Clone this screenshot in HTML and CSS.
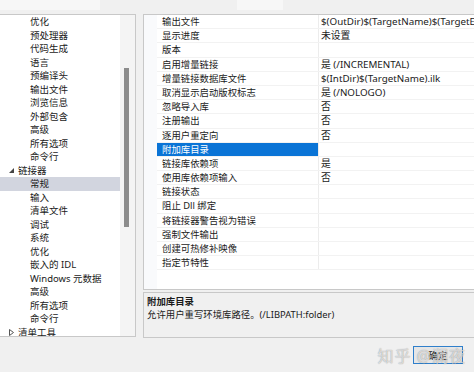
FILE: index.html
```html
<!DOCTYPE html>
<html lang="zh-CN">

<head>
    <meta charset="UTF-8">
    <meta name="viewport" content="width=device-width, initial-scale=1.0">
    <title>属性页</title>

    <link rel="stylesheet" href="styles.css">
</head>

<body>
    <div class="top">
        <span class="tab-edge tab-left"></span>
        <span class="tab-edge tab-mid"></span>
    </div>

    <div class="main">
        <div class="tree">
            <ul class="tree-list">
                <li class="sub">优化</li>
                <li class="sub">预处理器</li>
                <li class="sub">代码生成</li>
                <li class="sub">语言</li>
                <li class="sub">预编译头</li>
                <li class="sub">输出文件</li>
                <li class="sub">浏览信息</li>
                <li class="sub">外部包含</li>
                <li class="sub">高级</li>
                <li class="sub">所有选项</li>
                <li class="sub">命令行</li>
                <li class="group">
                    <svg class="arrow" width="5" height="5" viewBox="0 0 5 5"><polygon points="5,0 5,5 0,5" fill="#444" /></svg>
                    链接器
                </li>
                <li class="sub selected">常规</li>
                <li class="sub">输入</li>
                <li class="sub">清单文件</li>
                <li class="sub">调试</li>
                <li class="sub">系统</li>
                <li class="sub">优化</li>
                <li class="sub">嵌入的 IDL</li>
                <li class="sub">Windows 元数据</li>
                <li class="sub">高级</li>
                <li class="sub">所有选项</li>
                <li class="sub">命令行</li>
                <li class="group">
                    <svg class="arrow" width="5" height="7" viewBox="0 0 5 7"><polygon points="0.5,0.5 4.5,3.5 0.5,6.5" fill="none" stroke="#555" stroke-width="1" /></svg>
                    清单工具
                </li>
            </ul>
            <div class="scroll-track">
                <div class="scroll-thumb"></div>
            </div>
        </div>

        <div class="side">
            <div class="grid">
                <div class="gutter"></div>
                <div class="rows">
                    <div class="prop"><span class="name">输出文件</span><span class="value">$(OutDir)$(TargetName)$(TargetExt)</span></div>
                    <div class="prop"><span class="name">显示进度</span><span class="value">未设置</span></div>
                    <div class="prop"><span class="name">版本</span><span class="value"></span></div>
                    <div class="prop"><span class="name">启用增量链接</span><span class="value">是 (/INCREMENTAL)</span></div>
                    <div class="prop"><span class="name">增量链接数据库文件</span><span class="value">$(IntDir)$(TargetName).ilk</span></div>
                    <div class="prop"><span class="name">取消显示启动版权标志</span><span class="value">是 (/NOLOGO)</span></div>
                    <div class="prop"><span class="name">忽略导入库</span><span class="value">否</span></div>
                    <div class="prop"><span class="name">注册输出</span><span class="value">否</span></div>
                    <div class="prop"><span class="name">逐用户重定向</span><span class="value">否</span></div>
                    <div class="prop selected"><span class="name">附加库目录</span><span class="value"></span></div>
                    <div class="prop"><span class="name">链接库依赖项</span><span class="value">是</span></div>
                    <div class="prop"><span class="name">使用库依赖项输入</span><span class="value">否</span></div>
                    <div class="prop"><span class="name">链接状态</span><span class="value"></span></div>
                    <div class="prop"><span class="name">阻止 Dll 绑定</span><span class="value"></span></div>
                    <div class="prop"><span class="name">将链接器警告视为错误</span><span class="value"></span></div>
                    <div class="prop"><span class="name">强制文件输出</span><span class="value"></span></div>
                    <div class="prop"><span class="name">创建可热修补映像</span><span class="value"></span></div>
                    <div class="prop"><span class="name">指定节特性</span><span class="value"></span></div>
                </div>
            </div>

            <div class="desc">
                <div class="desc-title">附加库目录</div>
                <div class="desc-text">允许用户重写环境库路径。(/LIBPATH:folder)</div>
            </div>
        </div>
    </div>

    <div class="footer">
        <button class="ok">确定</button>
        <span class="watermark">知乎 @澜夜</span>
    </div>
</body>

</html>
```

FILE: styles.css
```css
* {
    box-sizing: border-box;
}
body {
    margin: 0;
    width: 474px;
    height: 372px;
    overflow: hidden;
    background: #f0f0f0;
    font-family: "Noto Sans", "Noto Sans CJK SC", sans-serif;
    font-size: 9.4px;
    color: #1a1a1a;
}
.top {
    height: 14px;
    position: relative;
}
.tab-edge {
    position: absolute;
    top: 0;
    height: 10px;
    background: #f7f7f7;
}
.tab-left {
    left: 0;
    width: 100px;
}
.tab-mid {
    left: 237px;
    width: 46px;
}
.main {
    display: flex;
    gap: 7px;
    height: 324px;
}

/* tree on the left */
.tree {
    flex: none;
    width: 136px;
    height: 323px;
    display: flex;
    background: #fff;
    border: 1px solid #c8c8c8;
    border-left: none;
    overflow: hidden;
}
.tree-list {
    list-style: none;
    margin: 0;
    padding: 0;
    flex: 1;
}
.tree-list li {
    height: 13.5px;
    line-height: 13.5px;
    white-space: nowrap;
    font-size: 9.5px;
}
.tree-list .sub {
    padding-left: 30px;
}
.tree-list .group {
    padding-left: 9px;
    display: flex;
    align-items: center;
    gap: 4px;
}
.tree-list .selected {
    background: #d2d5df;
}
.scroll-track {
    width: 15px;
    background: #f4f4f4;
    padding: 53px 6px 0 4px;
}
.scroll-thumb {
    height: 159px;
    background: #8c8c8c;
}

/* property grid */
.side {
    flex: 1;
    min-width: 0;
    display: flex;
    flex-direction: column;
    gap: 2px;
}
.grid {
    height: 276px;
    display: flex;
    background: #fff;
    border: 1px solid #c8c8c8;
    border-right: none;
}
.gutter {
    flex: none;
    width: 13px;
    background: #f9fafc;
}
.rows {
    flex: 1;
    min-width: 0;
}
.prop {
    display: flex;
    height: 14.2px;
    line-height: 13.2px;
    border-bottom: 1px solid #f2f2f2;
    white-space: nowrap;
}
.prop .name {
    flex: none;
    width: 162px;
    padding-left: 5px;
    border-right: 1px solid #ececec;
}
.prop .value {
    flex: 1;
    padding-left: 2px;
    overflow: hidden;
    font-size: 9.8px;
}
.prop.selected .name {
    background: #0a74d6;
    color: #fff;
}

/* description */
.desc {
    height: 46px;
    border: 1px solid #c8c8c8;
    border-right: none;
    padding: 2px 3px;
    line-height: 13px;
}
.desc-title {
    font-weight: bold;
}

/* bottom buttons */
.footer {
    height: 34px;
    position: relative;
    display: flex;
    justify-content: flex-end;
    padding: 8px 11px 0 0;
}
.ok {
    width: 50px;
    height: 18px;
    border: 1px solid #2f7fcb;
    background: #e6e6e6;
    font-family: inherit;
    font-size: 9.5px;
    color: #1a1a1a;
    padding: 0;
}
.watermark {
    position: absolute;
    right: 8px;
    top: 5px;
    font-size: 16px;
    color: rgba(255, 255, 255, 0.65);
    text-shadow: 0 0 1px rgba(0, 0, 0, 0.45);
    letter-spacing: 1px;
    pointer-events: none;
}
```
